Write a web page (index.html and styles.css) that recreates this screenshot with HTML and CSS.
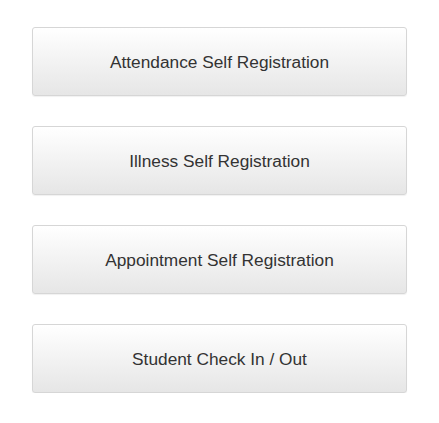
FILE: index.html
```html
<!DOCTYPE html>
<html>
<head>
<meta charset="utf-8">
<link rel="stylesheet" href="styles.css">
</head>
<body>
<div class="menu">
  <button class="btn">Attendance Self Registration</button>
  <button class="btn">Illness Self Registration</button>
  <button class="btn">Appointment Self Registration</button>
  <button class="btn">Student Check In / Out</button>
</div>
</body>
</html>
```
FILE: styles.css
```css
html, body {
  margin: 0;
  padding: 0;
  background: #ffffff;
}
.menu {
  display: flex;
  flex-direction: column;
  gap: 30px;
  padding: 27px 0 0 32px;
  width: 375px;
}
.btn {
  display: block;
  box-sizing: border-box;
  width: 375px;
  height: 69px;
  margin: 0;
  padding: 2px 0 0 0;
  border: 1px solid #d6d6d6;
  border-radius: 3px;
  background: linear-gradient(to bottom, #ffffff 0%, #e6e6e6 100%);
  box-shadow: 0 1px 1px rgba(0,0,0,0.06);
  font-family: "Liberation Sans", Arial, sans-serif;
  font-size: 17.3px;
  color: #333333;
  text-align: center;
}
```
